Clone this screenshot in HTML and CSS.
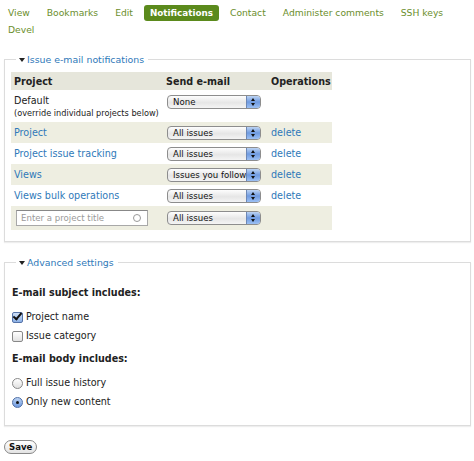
FILE: index.html
```html
<!DOCTYPE html>
<html>
<head>
<meta charset="utf-8">
<link rel="stylesheet" href="styles.css">
</head>
<body>
<ul class="tabs">
  <li><a href="#">View</a></li>
  <li><a href="#">Bookmarks</a></li>
  <li><a href="#">Edit</a></li>
  <li class="active"><a href="#">Notifications</a></li>
  <li><a href="#">Contact</a></li>
  <li><a href="#">Administer comments</a></li>
  <li><a href="#">SSH keys</a></li>
  <li><a href="#">Devel</a></li>
</ul>

<fieldset class="box first">
  <legend><span class="arrow"></span>Issue e-mail notifications</legend>
  <table class="grid">
    <colgroup><col class="c1"><col class="c2"><col class="c3"></colgroup>
    <thead>
      <tr><th>Project</th><th>Send e-mail</th><th>Operations</th></tr>
    </thead>
    <tbody>
      <tr class="even default">
        <td>Default<div class="small">(override individual projects below)</div></td>
        <td class="top"><span class="sel">None<span class="btn"></span></span></td>
        <td></td>
      </tr>
      <tr class="odd"><td><a href="#">Project</a></td><td><span class="sel">All issues<span class="btn"></span></span></td><td><a href="#">delete</a></td></tr>
      <tr class="even"><td><a href="#">Project issue tracking</a></td><td><span class="sel">All issues<span class="btn"></span></span></td><td><a href="#">delete</a></td></tr>
      <tr class="odd"><td><a href="#">Views</a></td><td><span class="sel">Issues you follow<span class="btn"></span></span></td><td><a href="#">delete</a></td></tr>
      <tr class="even"><td><a href="#">Views bulk operations</a></td><td><span class="sel">All issues<span class="btn"></span></span></td><td><a href="#">delete</a></td></tr>
      <tr class="odd inrow"><td><span class="input">Enter a project title<span class="throb"></span></span></td><td><span class="sel">All issues<span class="btn"></span></span></td><td></td></tr>
    </tbody>
  </table>
</fieldset>

<fieldset class="box second">
  <legend><span class="arrow"></span>Advanced settings</legend>
  <div class="label">E-mail subject includes:</div>
  <div class="opt"><span class="cb checked"></span>Project name</div>
  <div class="opt"><span class="cb"></span>Issue category</div>
  <div class="label l2">E-mail body includes:</div>
  <div class="opt r1"><span class="rd"></span>Full issue history</div>
  <div class="opt"><span class="rd on"></span>Only new content</div>
</fieldset>

<button class="save">Save</button>
</body>
</html>
```

FILE: styles.css
```css
html, body { margin: 0; padding: 0; background: #fff; }
body {
  font-family: "DejaVu Sans", Verdana, sans-serif;
  font-size: 9.6px;
  color: #222;
  width: 474px;
  height: 461px;
  overflow: hidden;
  padding: 5px 3px 0 4px;
  box-sizing: border-box;
}
a { text-decoration: none; color: #2f79b9; }

.tabs {
  list-style: none;
  margin: 0 0 0 -2px;
  padding: 0;
  display: flex;
  flex-wrap: wrap;
  row-gap: 1px;
  column-gap: 5px;
  font-size: 9.2px;
}
.tabs li { line-height: 16px; height: 16px; }
.tabs li a {
  display: block;
  padding: 0 6px;
  color: #6b8e2c;
  border-radius: 3px;
}
.tabs li.active a {
  background: #5b8a1c;
  color: #fff;
  font-weight: bold;
  font-size: 8.8px;
  padding: 0 6px;
}

.box {
  border: 1px solid #dcdcdc;
  margin: 0;
  padding: 0 6px 11px 6px;
  box-shadow: 0 1px 1px #eee;
}
.first { margin-top: 16px; }
.second { margin-top: 15px; padding-bottom: 15px; }
legend {
  color: #2f79b9;
  padding: 0 4px 0 3px;
  margin-left: 5px;
  font-size: 9.4px;
}
.arrow {
  display: inline-block;
  width: 0; height: 0;
  border-left: 3px solid transparent;
  border-right: 3px solid transparent;
  border-top: 4px solid #222;
  margin-right: 2px;
  vertical-align: 1px;
}

.grid {
  border-collapse: collapse;
  table-layout: fixed;
  width: 321px;
  margin-top: 7px;
}
.c1 { width: 152px; }
.c2 { width: 105px; }
.c3 { width: 64px; }
.grid th {
  text-align: left;
  background: #e6e6db;
  height: 18px;
  padding: 0 3px;
  font-weight: bold;
}
.grid td { padding: 0 3px; height: 21px; vertical-align: middle; }
.grid tr.odd td { background: #eeeee1; }
.grid tr.default { height: 32px; }
.grid tr.default td { height: auto; padding-top: 0; }
.grid tr.default td.top { vertical-align: top; padding-top: 5px; }
.small { font-size: 8.2px; margin-top: 2px; white-space: nowrap; }
.grid tr.inrow td { height: 24px; }

.sel {
  display: inline-block;
  position: relative;
  box-sizing: border-box;
  width: 94px;
  height: 14px;
  line-height: 12px;
  margin-left: 1px;
  font-size: 8.6px;
  padding-left: 5px;
  border: 1px solid #8d8d8d;
  border-radius: 4px;
  background: linear-gradient(#fdfdfd, #e6e6e6 55%, #f4f4f4);
  color: #111;
  vertical-align: middle;
  overflow: hidden;
  white-space: nowrap;
}
.btn {
  position: absolute;
  right: 0; top: 0; bottom: 0;
  width: 13px;
  border-left: 1px solid #6c87b5;
  background: linear-gradient(#bcd3f3, #6f9ae0 50%, #9cc0f4);
}
.btn::before, .btn::after {
  content: "";
  position: absolute;
  left: 4px;
  border-left: 2.5px solid transparent;
  border-right: 2.5px solid transparent;
}
.btn::before { top: 2px; border-bottom: 3px solid #111; }
.btn::after { bottom: 2px; border-top: 3px solid #111; }

.input {
  display: inline-block;
  position: relative;
  box-sizing: border-box;
  width: 132px;
  height: 16px;
  line-height: 14px;
  border: 1px solid #a8a8a8;
  border-top-color: #888;
  background: #fff;
  color: #9a9a9a;
  font-size: 8.6px;
  padding-left: 4px;
  margin-left: 2px;
  vertical-align: middle;
}
.throb {
  position: absolute;
  right: 6px; top: 3px;
  width: 6px; height: 6px;
  border: 1px solid #999;
  border-radius: 50%;
}

.second .label { font-weight: bold; margin: 17px 0 0 1px; line-height: 16px; }
.second .label.l2 { margin-top: 7px; }
.opt { display: flex; align-items: center; line-height: 16px; margin: 3px 0 0 1px; }
.label + .opt { margin-top: 8px; }
.opt.r1 { margin-top: 8px; }
.cb {
  width: 9px; height: 9px;
  border: 1px solid #888;
  border-radius: 2px;
  background: linear-gradient(#fff, #e2e2e2);
  margin-right: 3px;
  position: relative;
}
.cb.checked {
  border-color: #5573a8;
  background: linear-gradient(#cfe0f7, #8bb0e6);
}
.cb.checked::after {
  content: "";
  position: absolute;
  left: 2px; top: -2px;
  width: 3px; height: 7px;
  border: solid #111;
  border-width: 0 2px 2px 0;
  transform: rotate(40deg);
}
.rd {
  width: 9px; height: 9px;
  border: 1px solid #888;
  border-radius: 50%;
  background: linear-gradient(#fff, #e0e0e0);
  margin-right: 3px;
  position: relative;
}
.rd.on {
  border-color: #4f6fa6;
  background: linear-gradient(#bcd3f3, #6f9ae0);
}
.rd.on::after {
  content: "";
  position: absolute;
  left: 3px; top: 3px;
  width: 3px; height: 3px;
  border-radius: 50%;
  background: #111;
}

.save {
  display: block;
  margin-top: 14px;
  font-family: "DejaVu Sans", Verdana, sans-serif;
  font-size: 8.6px;
  font-weight: bold;
  height: 14px;
  line-height: 11px;
  padding: 0 4px;
  border: 1px solid #888;
  border-radius: 7px;
  background: linear-gradient(#fff, #e3e3e3);
  color: #111;
}
```
